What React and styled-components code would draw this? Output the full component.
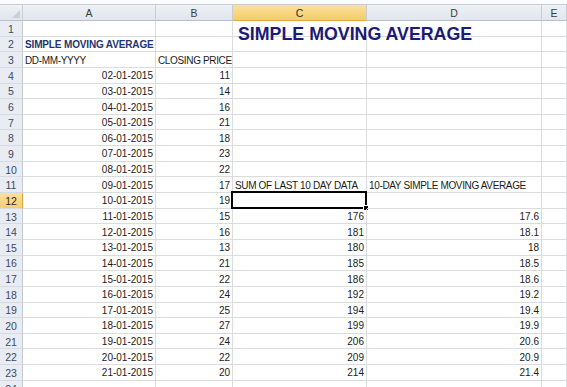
import styled, { createGlobalStyle, css } from "styled-components";

const GlobalStyle = createGlobalStyle`
  html, body {
    margin: 0;
    padding: 0;
    background: #ffffff;
    overflow: hidden;
  }
`;

const Page = styled.div`
  width: 567px;
  height: 387px;
  overflow: hidden;
  padding-top: 4px;
  box-sizing: border-box;
  background: #fbfcfd;
  font-family: "Liberation Sans", Arial, sans-serif;
`;

const Sheet = styled.div`
  display: grid;
  grid-template-columns: 23px 133px 77px 134px 175px 1fr;
  grid-template-rows: 16px;
  grid-auto-rows: 15.65px;
  border-top: 1px solid #c6ccd4;
  background: #ffffff;
`;

const ColHead = styled.div`
  box-sizing: border-box;
  display: flex;
  align-items: center;
  justify-content: center;
  font-size: 10.5px;
  color: #3c3c3c;
  border-right: 1px solid #c9ced6;
  border-bottom: 1px solid #b8c0cb;
  background: linear-gradient(#eef1f5, #e1e6ed);
  overflow: hidden;

  ${({ $active }) =>
    $active &&
    css`
      background: linear-gradient(#fae29c, #f4cc6a);
      border-bottom-color: #e2a93d;
      color: #2b2b2b;
    `}
`;

const Corner = styled(ColHead)`
  position: relative;
  &::after {
    content: "";
    position: absolute;
    right: 2px;
    bottom: 2px;
    border-left: 8px solid transparent;
    border-bottom: 8px solid #c9cfd8;
  }
`;

const RowHead = styled.div`
  box-sizing: border-box;
  display: flex;
  align-items: center;
  justify-content: center;
  padding-top: 1px;
  font-size: 10.5px;
  color: #3b4a60;
  background: #e9edf3;
  border-right: 1px solid #c3cad3;
  border-bottom: 1px solid #d5dbe3;
  overflow: hidden;

  ${({ $active }) =>
    $active &&
    css`
      background: linear-gradient(#fbe0a0, #f5ce72);
      color: #2a2a2a;
      border-right-color: #e2a93d;
    `}
`;

const Cell = styled.div`
  position: relative;
  box-sizing: border-box;
  display: flex;
  align-items: center;
  justify-content: ${({ $align }) => ($align === "right" ? "flex-end" : "flex-start")};
  padding: 1px 2px 0 2px;
  font-size: 10px;
  color: #1b1b1b;
  white-space: nowrap;
  overflow: visible;
  border-right: 1px solid ${({ $spill }) => ($spill ? "transparent" : "#dadcdd")};
  border-bottom: 1px solid #dadcdd;
`;

const Caps = styled.span`
  letter-spacing: -0.35px;
`;

const Subtitle = styled.span`
  font-weight: bold;
  font-size: 10px;
  color: #1f3570;
  letter-spacing: -0.15px;
`;

const Title = styled.span`
  position: relative;
  z-index: 2;
  align-self: flex-start;
  margin: 4px 0 0 3px;
  font-weight: bold;
  font-size: 17.8px;
  line-height: 1;
  color: #1b1a78;
`;

const Selection = styled.div`
  position: absolute;
  left: -2px;
  top: -2px;
  right: -1px;
  bottom: -1px;
  border: 2px solid #000000;
  pointer-events: none;

  &::after {
    content: "";
    position: absolute;
    right: -4px;
    bottom: -4px;
    width: 4px;
    height: 4px;
    background: #000000;
    border: 1px solid #ffffff;
  }
`;

const prices = [11, 14, 16, 21, 18, 23, 22, 17, 19, 15, 16, 13, 21, 22, 24, 25, 27, 24, 22, 20];
const sums = { 13: 176, 14: 181, 15: 180, 16: 185, 17: 186, 18: 192, 19: 194, 20: 199, 21: 206, 22: 209, 23: 214 };

const pad = (n) => String(n).padStart(2, "0");

function buildRows() {
  const rows = [];
  rows.push({ n: 1, c: <Title>SIMPLE MOVING AVERAGE</Title>, cAlign: "left", cSpill: true });
  rows.push({ n: 2, a: <Subtitle>SIMPLE MOVING AVERAGE</Subtitle>, aAlign: "left" });
  rows.push({ n: 3, a: <Caps>DD-MM-YYYY</Caps>, aAlign: "left", b: <Caps>CLOSING PRICE</Caps>, bAlign: "left" });
  prices.forEach((p, i) => {
    const n = i + 4;
    const row = { n, a: `${pad(i + 2)}-01-2015`, b: p };
    if (n === 11) {
      row.c = <Caps>SUM OF LAST 10 DAY DATA</Caps>;
      row.cAlign = "left";
      row.d = <Caps>10-DAY SIMPLE MOVING AVERAGE</Caps>;
      row.dAlign = "left";
    }
    if (sums[n]) {
      row.c = sums[n];
      row.d = String(sums[n] / 10);
    }
    rows.push(row);
  });
  rows.push({ n: 24 });
  return rows;
}

export default function App() {
  const rows = buildRows();
  return (
    <Page>
      <GlobalStyle />
      <Sheet>
        <Corner />
        <ColHead>A</ColHead>
        <ColHead>B</ColHead>
        <ColHead $active>C</ColHead>
        <ColHead>D</ColHead>
        <ColHead>E</ColHead>
        {rows.map((r) => (
          <Row key={r.n} r={r} />
        ))}
      </Sheet>
    </Page>
  );
}

function Row({ r }) {
  const selected = r.n === 12;
  return (
    <>
      <RowHead $active={selected}>{r.n}</RowHead>
      <Cell $align={r.aAlign || "right"}>{r.a}</Cell>
      <Cell $align={r.bAlign || "right"}>{r.b}</Cell>
      <Cell $align={r.cAlign || "right"} $spill={r.cSpill}>
        {r.c}
        {selected && <Selection />}
      </Cell>
      <Cell $align={r.dAlign || "right"}>{r.d}</Cell>
      <Cell />
    </>
  );
}
